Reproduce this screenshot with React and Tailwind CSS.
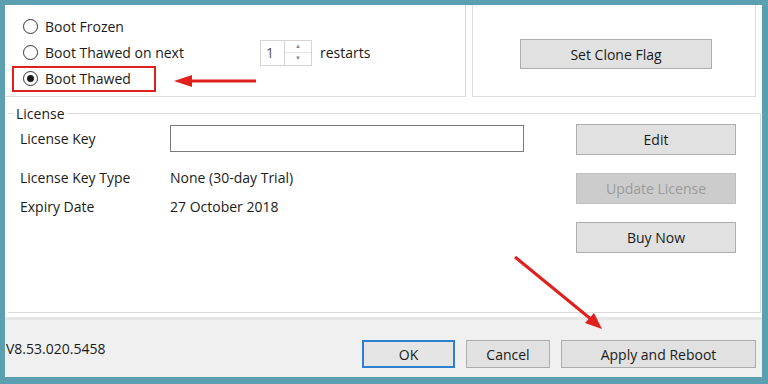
const font = { fontFamily: '"Open Sans", "Noto Sans", sans-serif' };

const Radio = ({ checked }) => (
  <span className="w-[15px] h-[15px] rounded-full border border-[#333] bg-white flex items-center justify-center shrink-0">
    {checked && <span className="w-[7px] h-[7px] rounded-full bg-[#1a1a1a]" />}
  </span>
);

const Btn = ({ children, className = '', disabled }) => (
  <div
    className={`flex items-center justify-center border shrink-0 ${
      disabled ? 'bg-[#cccccc] border-[#bfbfbf] text-[#9b9b9b]' : 'bg-[#e1e1e1] border-[#adadad] text-[#1a1a1a]'
    } ${className}`}
  >
    {children}
  </div>
);

export default function App() {
  return (
    <div
      className="relative w-[768px] h-[384px] bg-[#5b9fb1] pt-[5px] pl-[5px] pr-[6px] pb-[7px] text-[14px] text-[#1a1a1a] overflow-hidden"
      style={font}
    >
      <div className="w-full h-full bg-white flex flex-col">
        {/* top panels */}
        <div className="flex h-[92px] gap-[6px]">
          <div className="w-[461px] border-r border-b border-[#dcdcdc] pt-[8px] pl-[18px]">
            <div className="flex items-center h-[26px] gap-[7px]">
              <Radio />
              <span>Boot Frozen</span>
            </div>
            <div className="flex items-center h-[27px] gap-[7px]">
              <Radio />
              <span className="w-[208px] shrink-0">Boot Thawed on next</span>
              <div className="flex items-center gap-[8px]">
                <div className="flex h-[26px] border border-[#d4d4d4]">
                  <div className="w-[24px] pl-[5px] leading-[24px] text-[#555] border-r border-[#d4d4d4]">1</div>
                  <div className="w-[26px] flex flex-col">
                    <div className="flex-1 flex items-center justify-center text-[6px] text-[#888] border-b border-[#e5e5e5]">▲</div>
                    <div className="flex-1 flex items-center justify-center text-[6px] text-[#888]">▼</div>
                  </div>
                </div>
                <span>restarts</span>
              </div>
            </div>
            <div className="flex items-center h-[24px] gap-[7px]">
              <Radio checked />
              <span>Boot Thawed</span>
            </div>
          </div>
          <div className="w-[284px] border-l border-r border-b border-[#dcdcdc] pl-[47px] pt-[34px]">
            <Btn className="w-[192px] h-[30px]">Set Clone Flag</Btn>
          </div>
        </div>

        {/* license group */}
        <div className="relative mt-[16px] ml-[3px] mr-[1px] h-[200px] border border-[#dcdcdc] border-l-0 flex pt-[10px] pl-[12px]">
          <span className="absolute -top-[11px] left-[6px] bg-white px-[2px]">License</span>
          <div className="w-[504px] shrink-0 flex flex-col">
            <div className="flex items-center h-[27px] mt-[1px]">
              <span className="w-[150px] shrink-0">License Key</span>
              <div className="w-[354px] h-[27px] border border-[#7a7a7a] bg-white shrink-0" />
            </div>
            <div className="flex items-center h-[22px] mt-[14px]">
              <span className="w-[150px] shrink-0">License Key Type</span>
              <span>None (30-day Trial)</span>
            </div>
            <div className="flex items-center h-[22px] mt-[7px]">
              <span className="w-[150px] shrink-0">Expiry Date</span>
              <span>27 October 2018</span>
            </div>
          </div>
          <div className="ml-[52px] flex flex-col gap-[18px]">
            <Btn className="w-[160px] h-[31px]">Edit</Btn>
            <Btn className="w-[160px] h-[31px]" disabled>Update License</Btn>
            <Btn className="w-[160px] h-[31px]">Buy Now</Btn>
          </div>
        </div>

        {/* bottom bar */}
        <div className="mt-auto h-[60px] bg-[#f0f0f0] border-t-[3px] border-[#e6e6e6] flex items-start pt-[20px]">
          <span className="pl-[1px] -mt-[2px] w-[357px] shrink-0">V8.53.020.5458</span>
          <Btn className="w-[93px] h-[28px] !border-2 !border-[#2f7fd0] !bg-[#e5e5e5]">OK</Btn>
          <Btn className="ml-[11px] w-[84px] h-[28px]">Cancel</Btn>
          <Btn className="ml-[11px] w-[195px] h-[28px]">Apply and Reboot</Btn>
        </div>
      </div>

      {/* annotations */}
      <div className="absolute left-[12px] top-[66px] w-[144px] h-[26px] border-[2.5px] border-[#e0201c]" />
      <svg className="absolute left-0 top-0 pointer-events-none" width="768" height="384">
        <line x1="256" y1="81" x2="188" y2="81" stroke="#e0201c" strokeWidth="3" />
        <polygon points="174,81 192,75 192,87" fill="#e0201c" />
        <line x1="515" y1="257" x2="592" y2="320" stroke="#e0201c" strokeWidth="3" />
        <polygon points="602,329 585,323 594,313" fill="#e0201c" />
      </svg>
    </div>
  );
}
